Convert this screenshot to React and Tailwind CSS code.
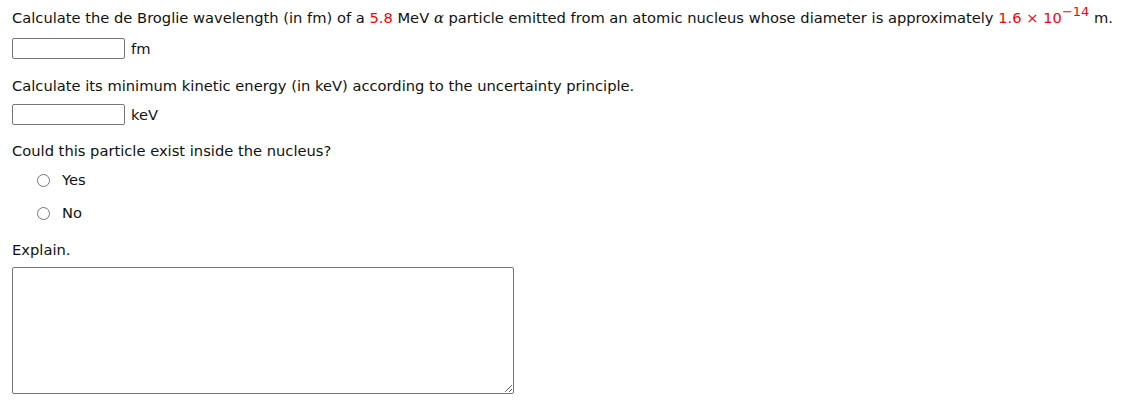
import React from 'react';

const Radio = ({ label }) => (
  <label className="flex items-center h-[20px]">
    <span className="w-[13px] h-[13px] rounded-full border border-[#767676] bg-white ml-[25px]"></span>
    <span className="ml-[12px]">{label}</span>
  </label>
);

const App = () => {
  return (
    <div className="min-h-screen bg-white px-3 pt-[8px] text-[14.7px] leading-[20px] text-[#111] font-['DejaVu_Sans',Verdana,sans-serif]">
      {/* Question 1 */}
      <p className="whitespace-nowrap">
        Calculate the de Broglie wavelength (in fm) of a <span className="text-[#f00]">5.8</span> MeV{' '}
        <span className="italic font-['DejaVu_Serif',serif]">α</span> particle emitted from an atomic nucleus whose
        diameter is approximately{' '}
        <span className="text-[#f00]">
          1.6 × 10<sup className="text-[13px] leading-none top-[-7px]">−14</sup>
        </span>{' '}
        m.
      </p>
      <div className="flex items-center mt-[10px]">
        <input type="text" className="w-[113px] h-[21px] border border-[#767676] rounded-[2px] outline-none" />
        <span className="ml-[6px]">fm</span>
      </div>

      {/* Question 2 */}
      <p className="mt-[17px]">
        Calculate its minimum kinetic energy (in keV) according to the uncertainty principle.
      </p>
      <div className="flex items-center mt-[8px]">
        <input type="text" className="w-[113px] h-[21px] border border-[#767676] rounded-[2px] outline-none" />
        <span className="ml-[6px]">keV</span>
      </div>

      {/* Question 3 */}
      <p className="mt-[16px]">Could this particle exist inside the nucleus?</p>
      <div className="mt-[9px] flex flex-col gap-[13px]">
        <Radio label="Yes" />
        <Radio label="No" />
      </div>

      <p className="mt-[17px]">Explain.</p>
      <textarea className="block mt-[7px] w-[502px] h-[127px] border border-[#767676] rounded-[2px] outline-none"></textarea>
    </div>
  );
};

export default App;
